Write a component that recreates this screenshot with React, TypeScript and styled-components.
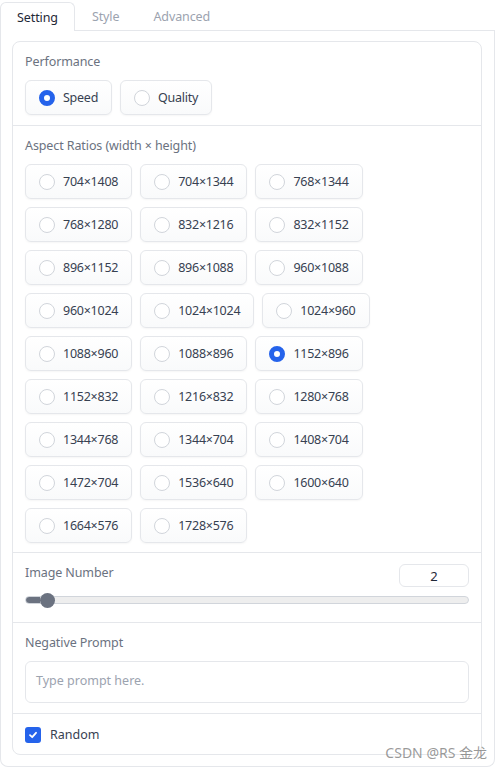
import { useState } from "react";
import styled, { createGlobalStyle } from "styled-components";

const GlobalStyle = createGlobalStyle`
  body {
    margin: 0;
    background: #ffffff;
    font-family: "Noto Sans", "Liberation Sans", sans-serif;
  }
`;

const Page = styled.div`
  position: relative;
  width: 495px;
  padding-top: 2px;
`;

// tabs
const TabBar = styled.div`
  display: flex;
  align-items: flex-end;
  height: 28px;
  border-bottom: 1px solid #e5e7eb;
`;

const Tab = styled.button<{ $active?: boolean }>`
  height: ${(p) => (p.$active ? "29px" : "28px")};
  margin-bottom: ${(p) => (p.$active ? "-1px" : "0")};
  padding: 0 16px;
  border: 1px solid ${(p) => (p.$active ? "#e5e7eb" : "transparent")};
  border-bottom: none;
  border-radius: 6px 6px 0 0;
  background: #ffffff;
  font-family: inherit;
  font-size: 12.5px;
  letter-spacing: -0.1px;
  color: ${(p) => (p.$active ? "#1f2937" : "#9ca3af")};
  cursor: pointer;
`;

const Panel = styled.div`
  padding: 10px 12px 11px 11px;
  border: 1px solid #e5e7eb;
  border-top: none;
  border-radius: 0 0 8px 8px;
`;

const Card = styled.div`
  border: 1px solid #e5e7eb;
  border-radius: 8px;
  overflow: hidden;
`;

const Section = styled.div<{ $tight?: boolean }>`
  padding: 11px 12px ${(p) => (p.$tight ? "9px" : "10px")} 12px;
  & + & {
    border-top: 1px solid #e5e7eb;
  }
`;

const Label = styled.div`
  font-size: 12.5px;
  letter-spacing: -0.1px;
  line-height: 18px;
  color: #6b7280;
  margin-bottom: 9px;
`;

const HeadRow = styled.div`
  display: flex;
  justify-content: space-between;
  align-items: flex-start;
  margin-bottom: 9px;
  ${Label} {
    margin-bottom: 0;
  }
`;

const OptionWrap = styled.div`
  display: flex;
  flex-wrap: wrap;
  gap: 8px;
`;

const Option = styled.label`
  display: flex;
  align-items: center;
  gap: 8px;
  height: 35px;
  box-sizing: border-box;
  padding: 0 13px;
  border: 1px solid #e5e7eb;
  border-radius: 6px;
  background: linear-gradient(to bottom, #ffffff, #f9fafb);
  box-shadow: 0 1px 2px rgba(0, 0, 0, 0.04);
  font-size: 12.5px;
  letter-spacing: -0.25px;
  color: #374151;
  cursor: pointer;
`;

const Radio = styled.span<{ $checked?: boolean }>`
  width: 16px;
  height: 16px;
  box-sizing: border-box;
  border-radius: 50%;
  border: ${(p) => (p.$checked ? "5px solid #2563eb" : "1px solid #d1d5db")};
  background: #ffffff;
`;

const NumberBox = styled.div`
  width: 70px;
  height: 23px;
  box-sizing: border-box;
  border: 1px solid #e5e7eb;
  border-radius: 6px;
  display: flex;
  align-items: center;
  justify-content: center;
  font-size: 13px;
  color: #1f2937;
`;

const Range = styled.input`
  -webkit-appearance: none;
  appearance: none;
  display: block;
  width: 100%;
  height: 8px;
  margin: 0 0 8px 0;
  border: 1px solid #d1d5db;
  border-radius: 4px;
  box-sizing: border-box;
  outline: none;
  &::-webkit-slider-thumb {
    -webkit-appearance: none;
    width: 15px;
    height: 15px;
    border-radius: 50%;
    background: #6b7280;
    border: none;
  }
`;

const Prompt = styled.textarea`
  display: block;
  width: 100%;
  height: 42px;
  box-sizing: border-box;
  padding: 10px 10px;
  border: 1px solid #e5e7eb;
  border-radius: 6px;
  font-family: inherit;
  font-size: 12.5px;
  color: #1f2937;
  resize: none;
  outline: none;
  &::placeholder {
    color: #9ca3af;
  }
`;

const CheckRow = styled.label`
  display: flex;
  align-items: center;
  gap: 9px;
  font-size: 12.5px;
  color: #374151;
  padding: 1px 0 1px 0;
`;

const CheckBox = styled.span`
  width: 16px;
  height: 16px;
  border-radius: 3px;
  background: #2563eb;
  display: flex;
  align-items: center;
  justify-content: center;
`;

const Watermark = styled.div`
  position: absolute;
  right: 8px;
  bottom: 5px;
  font-family: "Noto Sans", "Noto Sans CJK SC", sans-serif;
  font-size: 14px;
  color: rgba(120, 120, 120, 0.75);
`;

const ratios = [
  "704×1408", "704×1344", "768×1344", "768×1280", "832×1216", "832×1152",
  "896×1152", "896×1088", "960×1088", "960×1024", "1024×1024", "1024×960",
  "1088×960", "1088×896", "1152×896", "1152×832", "1216×832", "1280×768",
  "1344×768", "1344×704", "1408×704", "1472×704", "1536×640", "1600×640",
  "1664×576", "1728×576",
];

export default function App() {
  const [perf, setPerf] = useState("Speed");
  const [ratio, setRatio] = useState("1152×896");
  const [count, setCount] = useState(2);
  const pct = ((count - 1) / 31) * 100;

  return (
    <>
      <GlobalStyle />
      <Page>
        <TabBar>
          <Tab $active>Setting</Tab>
          <Tab>Style</Tab>
          <Tab>Advanced</Tab>
        </TabBar>
        <Panel>
          <Card>
            <Section>
              <Label>Performance</Label>
              <OptionWrap>
                {["Speed", "Quality"].map((p) => (
                  <Option key={p} onClick={() => setPerf(p)}>
                    <Radio $checked={perf === p} />
                    {p}
                  </Option>
                ))}
              </OptionWrap>
            </Section>
            <Section $tight>
              <Label>Aspect Ratios (width × height)</Label>
              <OptionWrap>
                {ratios.map((r) => (
                  <Option key={r} onClick={() => setRatio(r)}>
                    <Radio $checked={ratio === r} />
                    {r}
                  </Option>
                ))}
              </OptionWrap>
            </Section>
            <Section>
              <HeadRow>
                <Label>Image Number</Label>
                <NumberBox>{count}</NumberBox>
              </HeadRow>
              <Range
                type="range"
                min={1}
                max={32}
                value={count}
                onChange={(e) => setCount(Number(e.target.value))}
                style={{
                  background: `linear-gradient(to right, #6b7280 ${pct}%, #eeeeee ${pct}%)`,
                }}
              />
            </Section>
            <Section>
              <Label>Negative Prompt</Label>
              <Prompt placeholder="Type prompt here." />
            </Section>
            <Section>
              <CheckRow>
                <CheckBox>
                  <svg width="10" height="10" viewBox="0 0 10 10">
                    <path d="M2 5.2 L4.2 7.2 L8 2.8" fill="none" stroke="#fff" strokeWidth="1.8" strokeLinecap="round" strokeLinejoin="round" />
                  </svg>
                </CheckBox>
                Random
              </CheckRow>
            </Section>
          </Card>
        </Panel>
        <Watermark>CSDN @RS 金龙</Watermark>
      </Page>
    </>
  );
}
